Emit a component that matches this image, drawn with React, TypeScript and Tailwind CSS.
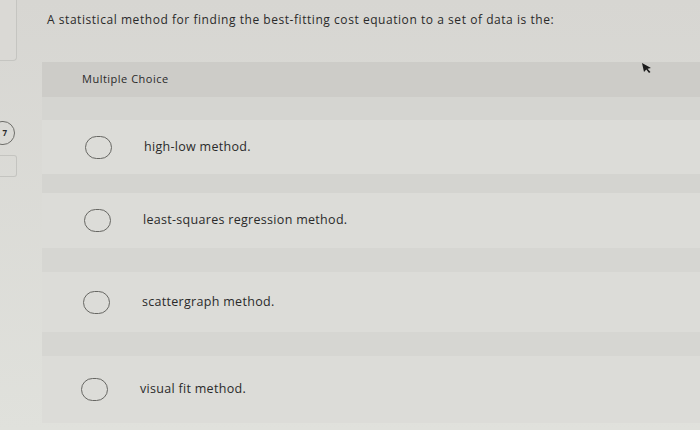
const choices = [
  { label: "high-low method.", row: "h-[54px] pl-[43px]" },
  { label: "least-squares regression method.", row: "h-[55px] pl-[42px]" },
  { label: "scattergraph method.", row: "h-[60px] pl-[41px]" },
  { label: "visual fit method.", row: "h-[67px] pl-[39px]" },
];

function Radio() {
  return <span className="h-[23px] w-[27px] shrink-0 rounded-full border-[1.5px] border-[#676763]" />;
}

export default function App() {
  return (
    <div className="relative flex h-[430px] w-[700px] overflow-hidden bg-gradient-to-b from-[#d7d6d2] to-[#e0e1dc] font-['Open_Sans',sans-serif] font-medium text-[#2a2a2a]">
      <aside className="flex w-[17px] shrink-0 flex-col">
        <div className="h-[61px] rounded-br-[4px] border-r border-b border-[#c5c5c1] bg-[#dad9d5]" />
        <div className="-ml-[10px] mt-[60px] flex h-[24px] w-[25px] items-center justify-end rounded-full border border-[#6e6e6a] pr-[7px] text-[8px] font-bold">
          7
        </div>
        <div className="mt-[10px] h-[22px] w-[17px] rounded-r-[3px] border border-l-0 border-[#c4c4c0]" />
      </aside>

      <main className="flex-1 pt-[12px]">
        <p className="pl-[30px] text-[12px] leading-[16px] tracking-[0.55px]">
          A statistical method for finding the best-fitting cost equation to a set of data is the:
        </p>

        <section className="mt-[34px] ml-[25px] flex flex-col">
          <div className="flex h-[35px] items-center bg-[#cdccc8] pl-[40px] text-[11px] tracking-[0.5px]">Multiple Choice</div>
          <div className="h-[23px] bg-[#d5d5d1]" />
          {choices.map((c, i) => (
            <div key={c.label} className="flex flex-col">
              <div className={`flex items-center bg-[#dcdcd8] ${c.row}`}>
                <Radio />
                <span className="ml-[32px] text-[12.5px] tracking-[0.3px]">{c.label}</span>
              </div>
              {i < choices.length - 1 ? (
                <div className={i === 0 ? "h-[19px] bg-[#d4d4d0]" : "h-[24px] bg-[#d6d6d2]"} />
              ) : null}
            </div>
          ))}
        </section>
      </main>

      <svg className="absolute left-[641px] top-[62px]" width="12" height="12" viewBox="0 0 12 12">
        <path d="M1 1 L10 6 L6.5 6.8 L9.5 10 L8 11 L5.3 7.6 L3 10 Z" fill="#1c1c1c" />
      </svg>
    </div>
  );
}
